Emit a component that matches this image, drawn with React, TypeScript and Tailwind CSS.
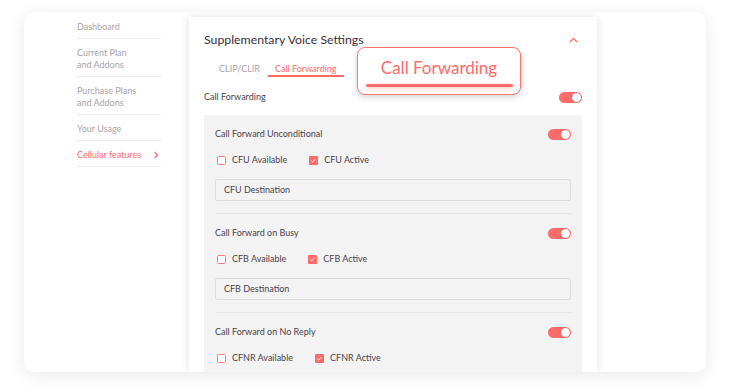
import React from "react";

const FONT = { fontFamily: "Lato, 'Noto Sans', sans-serif" };

function Toggle() {
  return (
    <div className="relative h-[11px] w-[23px] rounded-full bg-[#ff6b6b] shrink-0">
      <div className="absolute right-[1px] top-[1px] h-[9px] w-[9px] rounded-full bg-white shadow-[0_0_1px_rgba(0,0,0,0.3)]" />
    </div>
  );
}

function Check({ checked, label }: { checked?: boolean; label: string }) {
  return (
    <div className="flex items-center gap-[6px]">
      {checked ? (
        <div className="flex h-[9px] w-[9px] items-center justify-center rounded-[1px] bg-[#ff6b6b]">
          <svg width="7" height="7" viewBox="0 0 8 8">
            <path d="M1.5 4.2 L3.2 5.8 L6.5 2.2" fill="none" stroke="white" strokeWidth="1" />
          </svg>
        </div>
      ) : (
        <svg width="9" height="9" viewBox="0 0 9 9" className="block shrink-0">
          <rect x="0.5" y="0.5" width="8" height="8" rx="1" fill="white" stroke="#ff7b7b" strokeWidth="1" />
        </svg>
      )}
      <span className="text-[9px] leading-[12px] text-[#4b3f4b]">{label}</span>
    </div>
  );
}

function Block({
  title,
  a,
  b,
  dest,
  last,
}: {
  title: string;
  a: string;
  b: string;
  dest?: string;
  last?: boolean;
}) {
  return (
    <div className={`pt-[13px] ${last ? "" : "border-b border-[#e6e6e6] pb-[12px]"}`}>
      <div className="flex h-[12px] items-center justify-between">
        <span className="text-[9px] leading-[12px] text-[#4b3f4b]">{title}</span>
        <Toggle />
      </div>
      <div className="mt-[14px] flex h-[12px] items-center gap-[22px] pl-[2px]">
        <Check label={a} />
        <Check checked label={b} />
      </div>
      {dest && (
        <div className="mt-[13px] flex h-[22px] items-center rounded-[2px] border border-[#dcdcdc] bg-[#f3f3f3] pl-[8px] text-[9px] text-[#4b3f4b]">
          {dest}
        </div>
      )}
    </div>
  );
}

function NavItem({ children, double, active }: { children: React.ReactNode; double?: boolean; active?: boolean }) {
  return (
    <div
      className={`flex items-center justify-between border-b border-[#ededed] pb-[6px] pt-[8px] text-[9px] ${
        double ? "leading-[11.5px]" : "leading-[11px]"
      } ${active ? "text-[#ff6b6b]" : "text-[#a8a2a8]"}`}
    >
      <span>{children}</span>
      {active && (
        <svg width="6" height="8" viewBox="0 0 6 8" className="mr-[2px]">
          <path d="M1.5 1 L4.5 4 L1.5 7" fill="none" stroke="#ff6b6b" strokeWidth="1.3" />
        </svg>
      )}
    </div>
  );
}

export default function App() {
  return (
    <div className="h-[392px] w-[730px] overflow-hidden bg-white pl-[24px] pt-[12px]" style={FONT}>
      <div className="flex h-[360px] w-[682px] overflow-hidden rounded-[10px] bg-white shadow-[0_3px_18px_rgba(0,0,0,0.09)]">
        <div className="ml-[53px] w-[84px] pt-[1px]">
          <NavItem>Dashboard</NavItem>
          <NavItem double>
            Current Plan
            <br />
            and Addons
          </NavItem>
          <NavItem double>
            Purchase Plans
            <br />
            and Addons
          </NavItem>
          <NavItem>Your Usage</NavItem>
          <NavItem active>Cellular features</NavItem>
        </div>
        <div className="relative ml-[28px] mt-[5px] w-[408px] bg-white px-[15px] shadow-[0_0_9px_rgba(0,0,0,0.12)]">
          <div className="flex items-center justify-between pt-[15px]">
            <span className="text-[12.3px] leading-[16px] text-[#3b2f3b]">Supplementary Voice Settings</span>
            <svg width="9" height="6" viewBox="0 0 9 6" className="mr-[4px]">
              <path d="M1 5 L4.5 1.5 L8 5" fill="none" stroke="#ff6b6b" strokeWidth="1.3" />
            </svg>
          </div>
          <div className="ml-[8px] mt-[15px] flex items-start text-[9px] leading-[12px]">
            <div className="px-[7px] text-[#a8a2a8]">CLIP/CLIR</div>
            <div className="ml-[1px] border-b-2 border-[#ff6b6b] px-[7px] text-[#ff6b6b]">Call Forwarding</div>
          </div>
          <div className="mt-[14px] flex h-[12px] items-center justify-between">
            <span className="text-[9px] leading-[12px] text-[#4b3f4b]">Call Forwarding</span>
            <Toggle />
          </div>
          <div className="mt-[12px] rounded-[2px] bg-[#f3f3f3] px-[11px] pb-[20px]">
            <Block title="Call Forward Unconditional" a="CFU Available" b="CFU Active" dest="CFU Destination" />
            <Block title="Call Forward on Busy" a="CFB Available" b="CFB Active" dest="CFB Destination" />
            <Block title="Call Forward on No Reply" a="CFNR Available" b="CFNR Active" last />
          </div>

          <div className="absolute left-[168px] top-[30px] flex h-[48px] w-[164px] flex-col items-center rounded-[8px] border border-[#ff7470] bg-white shadow-[0_2px_6px_rgba(0,0,0,0.18)]">
            <span className="mt-[10px] text-[17px] leading-[20px] text-[#ff6b6b]">Call Forwarding</span>
            <div className="mt-[6px] h-[3px] w-[147px] rounded-full bg-[#ff6b6b] shadow-[0_1px_4px_rgba(255,107,107,0.5)]" />
          </div>
        </div>
      </div>
    </div>
  );
}
